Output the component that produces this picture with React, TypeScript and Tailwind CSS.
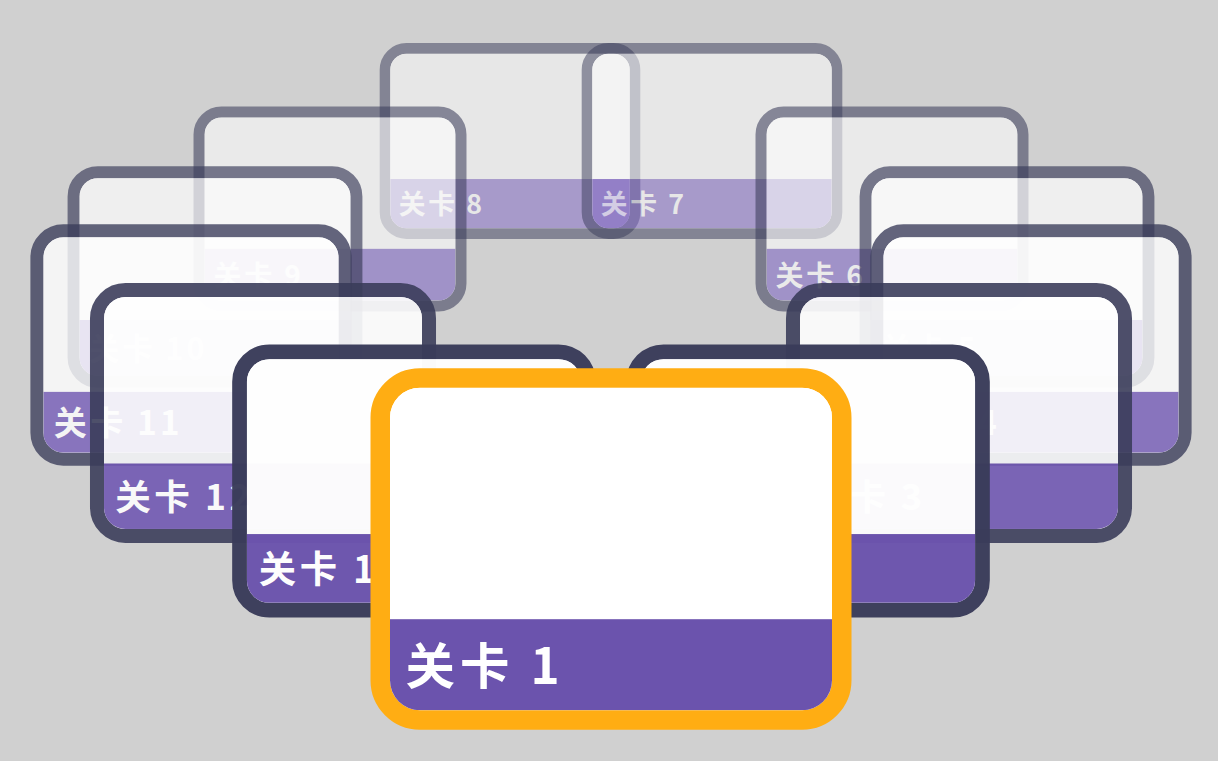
import React from 'react'

const TOTAL = 13
const RADIUS = 423
const CENTER_X = 611
const CENTER_Y = 548.5
const STEP_Y = 68

// band colour drifts lighter as the card moves to the back of the ring
function bandColor(t: number) {
  const from = [107, 83, 173]
  const to = [128, 102, 198]
  const c = from.map((v, i) => Math.round(v + (to[i] - v) * t))
  return `rgb(${c[0]}, ${c[1]}, ${c[2]})`
}

function LevelCard({ index, active }: { index: number; active: number }) {
  const offset = (index - active + TOTAL) % TOTAL
  const depth = Math.min(offset, TOTAL - offset)
  const angle = (offset / TOTAL) * Math.PI * 2
  const cos = Math.cos(angle)
  const isActive = offset === 0

  const scale = (0.85 + 0.15 * cos) * (isActive ? 1.3 : 1)
  const opacity = isActive ? 1 : 0.75 + 0.25 * cos
  const x = CENTER_X + RADIUS * Math.sin(angle)
  const y = CENTER_Y - STEP_Y * depth
  // right-hand side wins ties at the same depth
  const z = 40 - depth * 2 + (offset <= TOTAL / 2 ? 1 : 0)

  return (
    <div
      className="absolute"
      style={{
        left: x,
        top: y,
        zIndex: z,
        opacity,
        transform: `translate(-50%, -50%) scale(${scale})`,
      }}
    >
      <div
        className={`flex h-[278px] w-[370px] flex-col overflow-hidden rounded-[38px] border-[15px] bg-white ${
          isActive ? 'border-[#ffad13]' : 'border-[#3a3c5a]'
        }`}
      >
        <div className="flex-1 bg-white" />
        <div
          className="flex h-[70px] items-center pb-1 pl-3 text-[38px] font-bold tracking-[0.1em] text-white"
          style={{ background: bandColor((1 - cos) / 2) }}
        >
          关卡 {index + 1}
        </div>
      </div>
    </div>
  )
}

export default function App() {
  const [active] = React.useState(0)

  return (
    <div className="relative h-[761px] w-full overflow-hidden bg-[#d0d0d0] font-['Noto_Sans_CJK_SC','Noto_Sans',sans-serif]">
      {Array.from({ length: TOTAL }, (_, i) => (
        <LevelCard key={i} index={i} active={active} />
      ))}
    </div>
  )
}
